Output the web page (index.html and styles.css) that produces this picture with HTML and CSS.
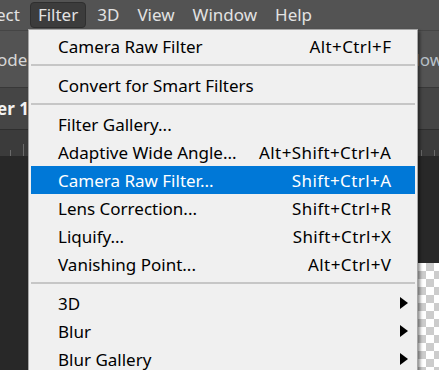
FILE: index.html
```html
<!DOCTYPE html>
<html lang="en">
<head>
    <meta charset="UTF-8">
    <title>Filter menu</title>
    <link rel="stylesheet" href="styles.css">
</head>
<body>
    <div class="menubar">
        <span class="top-item cut">ect</span>
        <span class="top-item open">Filter</span>
        <span class="top-item">3D</span>
        <span class="top-item">View</span>
        <span class="top-item">Window</span>
        <span class="top-item">Help</span>
    </div>
    <div class="options">
        <span class="opt-label">ode:</span>
        <span class="opt-right">low</span>
    </div>
    <div class="tabs">
        <span class="tab-name">er 1</span>
    </div>
    <div class="ruler">
        <i class="tick t1"></i><i class="tick t2"></i>
        <i class="tick t3"></i><i class="tick t4"></i>
    </div>
    <div class="workspace">
        <div class="doc"></div>
    </div>

    <div class="menu">
        <div class="item"><span>Camera Raw Filter</span><span class="key">Alt+Ctrl+F</span></div>
        <div class="sep"></div>
        <div class="item"><span>Convert for Smart Filters</span></div>
        <div class="sep"></div>
        <div class="item"><span>Filter Gallery...</span></div>
        <div class="item"><span>Adaptive Wide Angle...</span><span class="key">Alt+Shift+Ctrl+A</span></div>
        <div class="item active"><span>Camera Raw Filter...</span><span class="key">Shift+Ctrl+A</span></div>
        <div class="item"><span>Lens Correction...</span><span class="key">Shift+Ctrl+R</span></div>
        <div class="item"><span>Liquify...</span><span class="key">Shift+Ctrl+X</span></div>
        <div class="item"><span>Vanishing Point...</span><span class="key">Alt+Ctrl+V</span></div>
        <div class="sep"></div>
        <div class="item sub"><span>3D</span><svg class="arrow" width="8" height="12" viewBox="0 0 8 12"><polygon points="0,0 8,6 0,12"/></svg></div>
        <div class="item sub"><span>Blur</span><svg class="arrow" width="8" height="12" viewBox="0 0 8 12"><polygon points="0,0 8,6 0,12"/></svg></div>
        <div class="item sub"><span>Blur Gallery</span><svg class="arrow" width="8" height="12" viewBox="0 0 8 12"><polygon points="0,0 8,6 0,12"/></svg></div>
    </div>
</body>
</html>
```

FILE: styles.css
```css
body {
    margin: 0;
    width: 439px;
    height: 370px;
    overflow: hidden;
    position: relative;
    background: #282828;
    font-family: 'Noto Sans', 'Open Sans', sans-serif;
}

.menubar {
    height: 30px;
    background: #535353;
    display: flex;
    align-items: center;
    font-size: 17px;
    color: #e2e2e2;
}

.top-item {
    padding: 0 9px;
    line-height: 24px;
}

.top-item.cut {
    padding: 0;
    margin-left: -4px;
    margin-right: 10px;
}

.top-item.open {
    padding: 0 7px;
    margin-right: 2px;
    background: #3c3c3c;
    border: 1px solid #2f2f2f;
    border-radius: 4px;
}

.options {
    height: 56px;
    background: #535353;
    border-top: 1px solid #454545;
    display: flex;
    align-items: center;
    justify-content: space-between;
    font-size: 17px;
    color: #d6d6d6;
}

.opt-label {
    margin-left: -3px;
}

.opt-right {
    color: #b9c2ca;
    margin-right: -4px;
}

.tabs {
    height: 41px;
    background: #454545;
    border-top: 1px solid #383838;
    display: flex;
    align-items: center;
}

.tab-name {
    color: #f2f2f2;
    font-weight: 700;
    font-size: 17px;
    margin-left: -3px;
}

.ruler {
    height: 26px;
    background: #3b3b3b;
    border-top: 1px solid #2e2e2e;
    display: flex;
    align-items: flex-end;
}

.tick {
    width: 1px;
    height: 6px;
    background: #6a6a6a;
}

.t1 { margin-left: 10px; }
.t2 { margin-left: 12px; height: 12px; }
.t3 { margin-left: 397px; }
.t4 { margin-left: 12px; }

.workspace {
    padding: 107px 0 0 418px;
}

.doc {
    height: 200px;
    background-color: #fff;
    background-image:
        linear-gradient(45deg, #cccccc 25%, transparent 25%, transparent 75%, #cccccc 75%),
        linear-gradient(45deg, #cccccc 25%, transparent 25%, transparent 75%, #cccccc 75%);
    background-size: 16px 16px;
    background-position: 0 0, 8px 8px;
}

.menu {
    position: absolute;
    left: 28px;
    top: 29px;
    width: 384px;
    padding: 2px;
    background: #f0f0f0;
    border: 1px solid #a7a7a7;
    box-shadow: 2px 2px 3px rgba(0, 0, 0, 0.45);
    font-size: 17px;
    color: #000;
}

.item {
    height: 28px;
    display: flex;
    align-items: center;
    justify-content: space-between;
    padding: 0 24px 0 27px;
    white-space: nowrap;
}

.key {
    letter-spacing: 0.4px;
    margin-right: -0.4px;
}

.item.active {
    background: #0078d7;
    color: #fff;
}

.item.sub {
    padding-right: 7px;
}

.arrow {
    fill: #000;
}

.sep {
    height: 2px;
    margin: 4px 0 5px;
    background: #c6c6c6;
}
```
